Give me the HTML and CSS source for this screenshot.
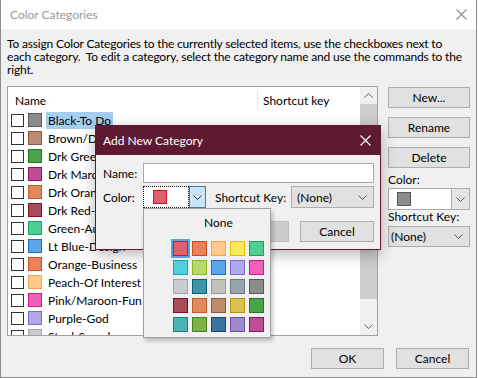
FILE: index.html
```html
<!DOCTYPE html>
<html>
<head>
    <title>Color Categories</title>
    <meta charset="utf-8">
    <link rel="stylesheet" href="styles.css">
</head>
<body>
    <div class="window">
        <div class="titlebar">
            <span class="title">Color Categories</span>
            <svg class="close" width="11" height="11" viewBox="0 0 11 11"><path d="M0.5 0.5L10.5 10.5M10.5 0.5L0.5 10.5" stroke="#8c8c8c" stroke-width="1.1"/></svg>
        </div>

        <div class="content">
            <p class="intro">To assign Color Categories to the currently selected items, use the checkboxes next to<br>each category.&nbsp; To edit a category, select the category name and use the commands to the<br>right.</p>

            <div class="main">
                <div class="listbox">
                    <div class="list-area">
                        <div class="list-head">
                            <div class="col-name">Name</div>
                            <div class="col-key">Shortcut key</div>
                        </div>
                        <div class="row"><span class="check"></span><span class="sw c-black"></span><span class="label selected">Black-To Do</span></div>
                        <div class="row"><span class="check"></span><span class="sw c-brown"></span><span class="label">Brown/Drafts</span></div>
                        <div class="row"><span class="check"></span><span class="sw c-dgreen"></span><span class="label">Drk Green-Finance</span></div>
                        <div class="row"><span class="check"></span><span class="sw c-dmaroon"></span><span class="label">Drk Maroon-Personal</span></div>
                        <div class="row"><span class="check"></span><span class="sw c-dorange"></span><span class="label">Drk Orange-Travel</span></div>
                        <div class="row"><span class="check"></span><span class="sw c-dred"></span><span class="label">Drk Red-Important</span></div>
                        <div class="row"><span class="check"></span><span class="sw c-green"></span><span class="label">Green-Authority</span></div>
                        <div class="row"><span class="check"></span><span class="sw c-blue"></span><span class="label">Lt Blue-Design</span></div>
                        <div class="row"><span class="check"></span><span class="sw c-orange"></span><span class="label">Orange-Business</span></div>
                        <div class="row"><span class="check"></span><span class="sw c-peach"></span><span class="label">Peach-Of Interest</span></div>
                        <div class="row"><span class="check"></span><span class="sw c-pink"></span><span class="label">Pink/Maroon-Fun</span></div>
                        <div class="row"><span class="check"></span><span class="sw c-purple"></span><span class="label">Purple-God</span></div>
                        <div class="row"><span class="check"></span><span class="sw c-steel"></span><span class="label">Steel-Samples</span></div>
                    </div>
                    <div class="scrollbar">
                        <div class="sb-btn">
                            <svg width="9" height="5" viewBox="0 0 9 5"><path d="M0.5 4.5L4.5 0.5L8.5 4.5" fill="none" stroke="#606060"/></svg>
                        </div>
                        <div class="sb-thumb"></div>
                        <div class="sb-track"></div>
                        <div class="sb-btn">
                            <svg width="9" height="5" viewBox="0 0 9 5"><path d="M0.5 0.5L4.5 4.5L8.5 0.5" fill="none" stroke="#606060"/></svg>
                        </div>
                    </div>
                </div>

                <div class="side">
                    <div class="btn">New...</div>
                    <div class="btn">Rename</div>
                    <div class="btn">Delete</div>
                    <div class="side-label">Color:</div>
                    <div class="combo">
                        <div class="combo-field"><span class="sw c-black"></span></div>
                        <div class="combo-btn">
                            <svg width="9" height="5" viewBox="0 0 9 5"><path d="M0.5 0.5L4.5 4.5L8.5 0.5" fill="none" stroke="#555"/></svg>
                        </div>
                    </div>
                    <div class="side-label">Shortcut Key:</div>
                    <div class="select">
                        <span>(None)</span>
                        <svg width="9" height="5" viewBox="0 0 9 5"><path d="M0.5 0.5L4.5 4.5L8.5 0.5" fill="none" stroke="#555"/></svg>
                    </div>
                </div>
            </div>

            <div class="footer">
                <div class="btn wide">OK</div>
                <div class="btn wide">Cancel</div>
            </div>
        </div>

        <!-- modal on top -->
        <div class="dialog">
            <div class="dlg-title">
                <span>Add New Category</span>
                <svg width="11" height="11" viewBox="0 0 11 11"><path d="M0.5 0.5L10.5 10.5M10.5 0.5L0.5 10.5" stroke="#fff" stroke-width="1.2"/></svg>
            </div>
            <div class="dlg-body">
                <div class="dlg-row">
                    <span class="dlg-label">Name:</span>
                    <div class="textbox"></div>
                </div>
                <div class="dlg-row color-row">
                    <span class="dlg-label">Color:</span>
                    <div class="ccombo">
                        <div class="ccombo-field"><span class="sw c-red"></span></div>
                        <div class="ccombo-btn">
                            <svg width="9" height="5" viewBox="0 0 9 5"><path d="M0.5 0.5L4.5 4.5L8.5 0.5" fill="none" stroke="#333"/></svg>
                        </div>
                    </div>
                    <span class="key-label">Shortcut Key:</span>
                    <div class="select dlg-select">
                        <span>(None)</span>
                        <svg width="9" height="5" viewBox="0 0 9 5"><path d="M0.5 0.5L4.5 4.5L8.5 0.5" fill="none" stroke="#555"/></svg>
                    </div>
                </div>
                <div class="dlg-buttons">
                    <div class="btn dlg-btn disabled">OK</div>
                    <div class="btn dlg-btn">Cancel</div>
                </div>
            </div>
        </div>

        <div class="popup">
            <div class="none">None</div>
            <div class="grid">
                <span class="cell c-red selected"></span>
                <span class="cell c-orange"></span>
                <span class="cell c-peach"></span>
                <span class="cell c-yellow"></span>
                <span class="cell c-green"></span>
                <span class="cell c-teal"></span>
                <span class="cell c-olive"></span>
                <span class="cell c-blue"></span>
                <span class="cell c-purple"></span>
                <span class="cell c-pink"></span>
                <span class="cell c-steel"></span>
                <span class="cell c-dteal"></span>
                <span class="cell c-gray"></span>
                <span class="cell c-dsteel"></span>
                <span class="cell c-black"></span>
                <span class="cell c-dred"></span>
                <span class="cell c-dorange"></span>
                <span class="cell c-brown"></span>
                <span class="cell c-dyellow"></span>
                <span class="cell c-dgreen"></span>
                <span class="cell c-dteal2"></span>
                <span class="cell c-dolive"></span>
                <span class="cell c-navy"></span>
                <span class="cell c-dpurple"></span>
                <span class="cell c-dmaroon"></span>
            </div>
        </div>
    </div>
</body>
</html>
```

FILE: styles.css
```css
body {
    margin: 0;
    font-family: Lato, "Liberation Sans", sans-serif;
    font-size: 12px;
    color: #000;
    background: #fff;
}

.window {
    position: relative;
    width: 477px;
    height: 378px;
    box-sizing: border-box;
    border: 1px solid #8c8c8c;
    border-top: none;
    background: #f0f0f0;
    overflow: hidden;
}

.titlebar {
    height: 29px;
    background: #fff;
    display: flex;
    align-items: center;
    justify-content: space-between;
    padding: 0 9px 0 9px;
}

.title {
    color: #999;
}

.content {
    padding: 8px 0 0 6px;
}

.intro {
    margin: 0;
    line-height: 13px;
    white-space: nowrap;
    letter-spacing: -0.18px;
}

.main {
    display: flex;
    margin-top: 10px;
}

/* category list */
.listbox {
    width: 371px;
    height: 250px;
    box-sizing: border-box;
    border: 1px solid #a0a0a0;
    background: #fff;
    display: flex;
}

.list-area {
    flex: 1;
    overflow: hidden;
}

.list-head {
    display: flex;
    height: 24px;
}

.col-name {
    width: 250px;
    height: 20px;
    padding-left: 7px;
    box-sizing: border-box;
    border-right: 1px solid #e5e5e5;
    display: flex;
    align-items: center;
    margin-top: 3px;
}

.col-key {
    padding-left: 5px;
    display: flex;
    align-items: center;
    margin-top: 3px;
    height: 20px;
}

.row {
    display: flex;
    align-items: center;
    height: 18px;
    padding-left: 3px;
    white-space: nowrap;
}

.check {
    width: 13px;
    height: 13px;
    box-sizing: border-box;
    border: 1px solid #333;
    background: #fff;
    margin-right: 4px;
}

.sw {
    display: block;
    width: 14px;
    height: 14px;
    box-sizing: border-box;
    border: 1px solid;
}

.label {
    margin-left: 4px;
    padding: 0 2px;
    height: 17px;
    line-height: 17px;
}

.label.selected {
    background: #a4cef0;
}

.scrollbar {
    width: 17px;
    display: flex;
    flex-direction: column;
    background: #f0f0f0;
}

.sb-btn {
    height: 17px;
    display: flex;
    align-items: center;
    justify-content: center;
    background: #f0f0f0;
}

.sb-thumb {
    height: 195px;
    background: #cdcdcd;
}

.sb-track {
    flex: 1;
}

/* right hand commands */
.side {
    margin-left: 10px;
    margin-top: 1px;
    width: 82px;
    display: flex;
    flex-direction: column;
}

.btn {
    height: 21px;
    box-sizing: border-box;
    border: 1px solid #adadad;
    background: #e1e1e1;
    display: flex;
    align-items: center;
    justify-content: center;
    margin-bottom: 9px;
}

.side-label {
    height: 14px;
    line-height: 14px;
    margin-top: -4px;
    margin-bottom: 1px;
}

.side-label + .select {
    margin-top: 1px;
}

.combo {
    display: flex;
    height: 22px;
    box-sizing: border-box;
    border: 1px solid #adadad;
    background: #fff;
    margin-bottom: 4px;
}

.combo-field {
    flex: 1;
    display: flex;
    align-items: center;
    padding-left: 8px;
}

.combo-btn {
    width: 17px;
    background: #e5e5e5;
    border-left: 1px solid #adadad;
    display: flex;
    align-items: center;
    justify-content: center;
}

.select {
    height: 21px;
    box-sizing: border-box;
    border: 1px solid #adadad;
    background: #e1e1e1;
    display: flex;
    align-items: center;
    justify-content: space-between;
    padding: 0 6px 0 2px;
}

.footer {
    display: flex;
    justify-content: flex-end;
    gap: 12px;
    margin-top: 12px;
    padding-right: 7px;
}

.btn.wide {
    width: 73px;
}

/* Add New Category modal */
.dialog {
    position: absolute;
    left: 94px;
    top: 125px;
    width: 286px;
    height: 125px;
    box-sizing: border-box;
    border: 1px solid #5d1a32;
    background: #f0f0f0;
    box-shadow: 0 4px 14px rgba(0, 0, 0, 0.3);
}

.dlg-title {
    height: 29px;
    background: #5d1a32;
    color: #fff;
    display: flex;
    align-items: center;
    justify-content: space-between;
    padding: 0 9px 0 7px;
}

.dlg-body {
    padding: 8px 6px 0 7px;
}

.dlg-row {
    display: flex;
    align-items: center;
    height: 20px;
}

.dlg-label {
    width: 40px;
}

.textbox {
    flex: 1;
    height: 20px;
    box-sizing: border-box;
    border: 1px solid #a8a8a8;
    background: #fff;
}

.color-row {
    height: 22px;
    margin-top: 3px;
}

.ccombo {
    display: flex;
    width: 63px;
    height: 22px;
}

.ccombo-field {
    flex: 1;
    box-sizing: border-box;
    border: 1px dotted #111;
    background: #fff;
    display: flex;
    align-items: center;
    padding-left: 9px;
}

.ccombo-btn {
    width: 17px;
    box-sizing: border-box;
    border: 1px solid #3c7fb1;
    background: #cce4f7;
    display: flex;
    align-items: center;
    justify-content: center;
}

.key-label {
    margin-left: 9px;
}

.dlg-select {
    margin-left: auto;
    width: 83px;
    height: 22px;
    padding-left: 5px;
}

.dlg-buttons {
    display: flex;
    justify-content: flex-end;
    gap: 11px;
    margin-top: 13px;
}

.dlg-btn {
    width: 74px;
    margin-bottom: 0;
}

.dlg-btn.disabled {
    background: #cccccc;
    border-color: #bfbfbf;
    color: #838383;
}

/* colour picker drop-down */
.popup {
    position: absolute;
    left: 142px;
    top: 208px;
    width: 128px;
    height: 130px;
    box-sizing: border-box;
    border: 1px solid #a0a0a0;
    background: #f0f0f0;
    box-shadow: 2px 3px 4px rgba(0, 0, 0, 0.22);
    padding: 7px 0 0 29px;
}

.none {
    width: 91px;
    text-align: center;
    height: 14px;
    line-height: 14px;
}

.grid {
    display: grid;
    grid-template-columns: repeat(5, 15px);
    gap: 4px;
    margin-top: 11px;
}

.cell {
    width: 15px;
    height: 15px;
    box-sizing: border-box;
    border: 1px solid;
}

.cell.selected {
    box-shadow: 0 0 0 2px #5aa2e6;
}

/* category colours */
.c-red { background: #e0606e; border-color: #c01c30; }
.c-orange { background: #e8825c; border-color: #c84e20; }
.c-peach { background: #ffca8a; border-color: #f5a24e; }
.c-yellow { background: #fde95c; border-color: #e0c000; }
.c-green { background: #4fcf8f; border-color: #1aa060; }
.c-teal { background: #50d0da; border-color: #10a8b8; }
.c-olive { background: #b8d868; border-color: #8cb820; }
.c-blue { background: #5aa6e8; border-color: #1a70c8; }
.c-purple { background: #b0a8e8; border-color: #7c6cd0; }
.c-pink { background: #f060b8; border-color: #d01890; }
.c-steel { background: #c8ccd0; border-color: #a0a6ac; }
.c-dteal { background: #4096a8; border-color: #0c5e70; }
.c-gray { background: #c2c2b8; border-color: #9a9a8c; }
.c-dsteel { background: #98a4ac; border-color: #6c7880; }
.c-black { background: #8c8c8c; border-color: #585858; }
.c-dred { background: #a84c5a; border-color: #7a1428; }
.c-dorange { background: #e08a5e; border-color: #c05c28; }
.c-brown { background: #bd8c6e; border-color: #8c5a3a; }
.c-dyellow { background: #dcc050; border-color: #b89410; }
.c-dgreen { background: #4aa34a; border-color: #1e7a1e; }
.c-dteal2 { background: #48b4b4; border-color: #0c8888; }
.c-dolive { background: #80b048; border-color: #4c8418; }
.c-navy { background: #3c74a0; border-color: #14446c; }
.c-dpurple { background: #a088cc; border-color: #7050a8; }
.c-dmaroon { background: #c04c94; border-color: #8c1468; }
```
